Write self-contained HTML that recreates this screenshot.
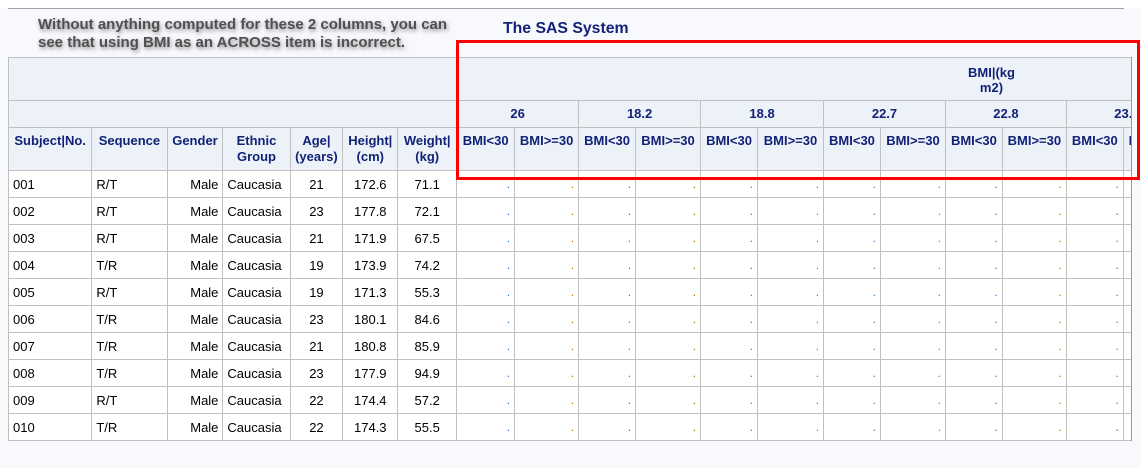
<!DOCTYPE html>
<html><head><meta charset="utf-8"><style>
html,body{margin:0;padding:0;}
body{width:1141px;height:468px;background:#f8f9fd;position:relative;overflow:hidden;font-family:"Liberation Sans",Arial,sans-serif;}
.top{position:absolute;left:0;top:0;width:1141px;height:8px;background:#fff;}
.hl{position:absolute;left:8px;top:8px;width:1116px;height:1px;background:#a0a0a0;}
.note{position:absolute;left:38px;top:16px;font-size:15px;font-weight:bold;color:#505050;line-height:18px;text-shadow:1px 2px 4px rgba(0,0,0,0.45);}
.title{position:absolute;left:503px;top:20px;font-size:15.8px;font-weight:bold;color:#112277;}
.wrap{position:absolute;left:8px;top:57px;width:1123px;height:384px;overflow:hidden;}
table{border-collapse:collapse;table-layout:fixed;width:1180px;font-size:13px;}
td,th{border:1px solid #c0c0c0;padding:0 4px;white-space:nowrap;overflow:hidden;}
th{background:#edf2f9;color:#112277;font-weight:bold;text-align:center;line-height:16px;}
td{background:#fff;color:#000;height:26px;}
.r1 th{height:42px;}
.r2 th{height:26px;}
.r3 th{height:37px;vertical-align:top;padding-top:5px;}
.l{text-align:left}.r{text-align:right}.c{text-align:center}
.o{color:#c07000;font-size:12px;}.b{color:#2a7bd0;font-size:12px;}
.bmi{position:absolute;left:968px;top:65px;color:#112277;font-weight:bold;font-size:13px;text-align:center;line-height:15px;}
.red{position:absolute;left:456px;top:40px;width:678px;height:134px;border:3px solid #ff0000;}
.sb{position:absolute;left:1131px;top:57px;width:1px;height:384px;background:#999;}
</style></head><body>
<div class="top"></div><div class="hl"></div>
<div class="note">Without anything computed for these 2 columns, you can<br>see that using BMI as an ACROSS item is incorrect.</div>
<div class="title">The SAS System</div>
<div class="wrap">
<table>
<colgroup><col style="width:82px"><col style="width:74px"><col style="width:55px"><col style="width:66px"><col style="width:52px"><col style="width:54px"><col style="width:58px"><col style="width:57px"><col style="width:63px"><col style="width:56px"><col style="width:64px"><col style="width:56px"><col style="width:65px"><col style="width:56px"><col style="width:64px"><col style="width:56px"><col style="width:63px"><col style="width:56px"><col style="width:63px"></colgroup>
<tr class="r1"><th colspan="7"></th><th colspan="12"></th></tr>
<tr class="r2"><th colspan="7"></th><th colspan="2">26</th><th colspan="2">18.2</th><th colspan="2">18.8</th><th colspan="2">22.7</th><th colspan="2">22.8</th><th colspan="2">23.4</th></tr>
<tr class="r3"><th>Subject|No.</th><th>Sequence</th><th>Gender</th><th>Ethnic<br>Group</th><th>Age|<br>(years)</th><th>Height|<br>(cm)</th><th>Weight|<br>(kg)</th><th>BMI&lt;30</th><th>BMI&gt;=30</th><th>BMI&lt;30</th><th>BMI&gt;=30</th><th>BMI&lt;30</th><th>BMI&gt;=30</th><th>BMI&lt;30</th><th>BMI&gt;=30</th><th>BMI&lt;30</th><th>BMI&gt;=30</th><th>BMI&lt;30</th><th>BMI&gt;=30</th></tr>
<tr><td class="l">001</td><td class="l">R/T</td><td class="r">Male</td><td class="l">Caucasia</td><td class="c">21</td><td class="c">172.6</td><td class="c">71.1</td><td class="r b">.</td><td class="r o">.</td><td class="r b">.</td><td class="r o">.</td><td class="r b">.</td><td class="r o">.</td><td class="r b">.</td><td class="r o">.</td><td class="r b">.</td><td class="r o">.</td><td class="r b">.</td><td class="r o">.</td></tr>
<tr><td class="l">002</td><td class="l">R/T</td><td class="r">Male</td><td class="l">Caucasia</td><td class="c">23</td><td class="c">177.8</td><td class="c">72.1</td><td class="r b">.</td><td class="r o">.</td><td class="r b">.</td><td class="r o">.</td><td class="r b">.</td><td class="r o">.</td><td class="r b">.</td><td class="r o">.</td><td class="r b">.</td><td class="r o">.</td><td class="r b">.</td><td class="r o">.</td></tr>
<tr><td class="l">003</td><td class="l">R/T</td><td class="r">Male</td><td class="l">Caucasia</td><td class="c">21</td><td class="c">171.9</td><td class="c">67.5</td><td class="r b">.</td><td class="r o">.</td><td class="r b">.</td><td class="r o">.</td><td class="r b">.</td><td class="r o">.</td><td class="r b">.</td><td class="r o">.</td><td class="r b">.</td><td class="r o">.</td><td class="r b">.</td><td class="r o">.</td></tr>
<tr><td class="l">004</td><td class="l">T/R</td><td class="r">Male</td><td class="l">Caucasia</td><td class="c">19</td><td class="c">173.9</td><td class="c">74.2</td><td class="r b">.</td><td class="r o">.</td><td class="r b">.</td><td class="r o">.</td><td class="r b">.</td><td class="r o">.</td><td class="r b">.</td><td class="r o">.</td><td class="r b">.</td><td class="r o">.</td><td class="r b">.</td><td class="r o">.</td></tr>
<tr><td class="l">005</td><td class="l">R/T</td><td class="r">Male</td><td class="l">Caucasia</td><td class="c">19</td><td class="c">171.3</td><td class="c">55.3</td><td class="r b">.</td><td class="r o">.</td><td class="r b">.</td><td class="r o">.</td><td class="r b">.</td><td class="r o">.</td><td class="r b">.</td><td class="r o">.</td><td class="r b">.</td><td class="r o">.</td><td class="r b">.</td><td class="r o">.</td></tr>
<tr><td class="l">006</td><td class="l">T/R</td><td class="r">Male</td><td class="l">Caucasia</td><td class="c">23</td><td class="c">180.1</td><td class="c">84.6</td><td class="r b">.</td><td class="r o">.</td><td class="r b">.</td><td class="r o">.</td><td class="r b">.</td><td class="r o">.</td><td class="r b">.</td><td class="r o">.</td><td class="r b">.</td><td class="r o">.</td><td class="r b">.</td><td class="r o">.</td></tr>
<tr><td class="l">007</td><td class="l">T/R</td><td class="r">Male</td><td class="l">Caucasia</td><td class="c">21</td><td class="c">180.8</td><td class="c">85.9</td><td class="r b">.</td><td class="r o">.</td><td class="r b">.</td><td class="r o">.</td><td class="r b">.</td><td class="r o">.</td><td class="r b">.</td><td class="r o">.</td><td class="r b">.</td><td class="r o">.</td><td class="r b">.</td><td class="r o">.</td></tr>
<tr><td class="l">008</td><td class="l">T/R</td><td class="r">Male</td><td class="l">Caucasia</td><td class="c">23</td><td class="c">177.9</td><td class="c">94.9</td><td class="r b">.</td><td class="r o">.</td><td class="r b">.</td><td class="r o">.</td><td class="r b">.</td><td class="r o">.</td><td class="r b">.</td><td class="r o">.</td><td class="r b">.</td><td class="r o">.</td><td class="r b">.</td><td class="r o">.</td></tr>
<tr><td class="l">009</td><td class="l">R/T</td><td class="r">Male</td><td class="l">Caucasia</td><td class="c">22</td><td class="c">174.4</td><td class="c">57.2</td><td class="r b">.</td><td class="r o">.</td><td class="r b">.</td><td class="r o">.</td><td class="r b">.</td><td class="r o">.</td><td class="r b">.</td><td class="r o">.</td><td class="r b">.</td><td class="r o">.</td><td class="r b">.</td><td class="r o">.</td></tr>
<tr><td class="l">010</td><td class="l">T/R</td><td class="r">Male</td><td class="l">Caucasia</td><td class="c">22</td><td class="c">174.3</td><td class="c">55.5</td><td class="r b">.</td><td class="r o">.</td><td class="r b">.</td><td class="r o">.</td><td class="r b">.</td><td class="r o">.</td><td class="r b">.</td><td class="r o">.</td><td class="r b">.</td><td class="r o">.</td><td class="r b">.</td><td class="r o">.</td></tr>
</table>
</div>
<div class="bmi">BMI|(kg<br>m2)</div>
<div class="sb"></div>
<div class="red"></div>
</body></html>
